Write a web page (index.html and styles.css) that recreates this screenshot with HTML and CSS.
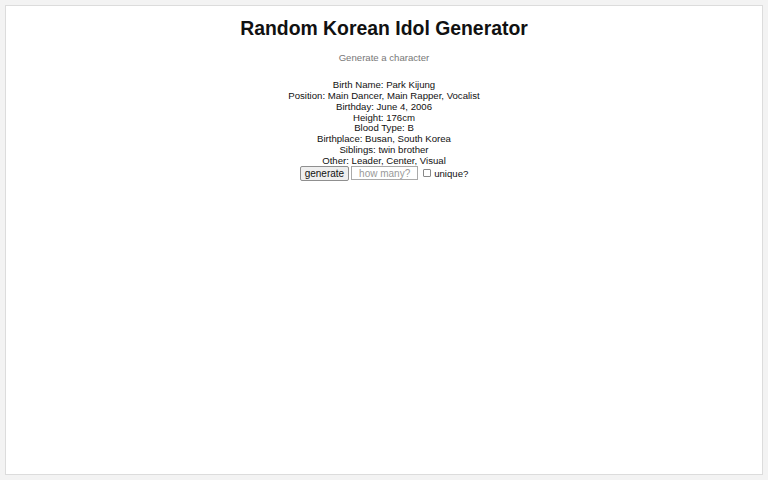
FILE: index.html
```html
<!DOCTYPE html>
<html lang="en">
<head>
<meta charset="utf-8">
<title>Random Korean Idol Generator</title>
<link rel="stylesheet" href="styles.css">
</head>
<body>
<main class="panel">
  <h1 class="title">Random Korean Idol Generator</h1>
  <p class="subtitle">Generate a character</p>
  <div class="profile">
    <div>Birth Name: Park Kijung</div>
    <div>Position: Main Dancer, Main Rapper, Vocalist</div>
    <div>Birthday: June 4, 2006</div>
    <div>Height: 176cm</div>
    <div>Blood Type: B</div>
    <div>Birthplace: Busan, South Korea</div>
    <div>Siblings: twin brother</div>
    <div>Other: Leader, Center, Visual</div>
  </div>
  <form class="controls">
    <button type="button" class="btn">generate</button>
    <input type="text" class="count" placeholder="how many?">
    <label class="unique"><input type="checkbox" class="box"> unique?</label>
  </form>
</main>
</body>
</html>
```

FILE: styles.css
```css
html, body {
  margin: 0;
  padding: 0;
  height: 100%;
}

body {
  background: #f3f3f3;
  padding: 5px;
  box-sizing: border-box;
  font-family: "Liberation Sans", Arial, sans-serif;
  color: #111;
}

.panel {
  background: #fff;
  border: 1px solid #dcdcdc;
  height: 100%;
  box-sizing: border-box;
  text-align: center;
  padding-top: 10px;
}

.title {
  font-size: 19.4px;
  font-weight: bold;
  margin: 0;
  line-height: 24px;
}

.subtitle {
  margin: 12px 0 0;
  font-size: 9.6px;
  color: #777;
  line-height: 12px;
}

.profile {
  margin-top: 16px;
  font-size: 9.6px;
  line-height: 10.86px;
}

.controls {
  margin: -1px 0 0;
  display: flex;
  justify-content: center;
  align-items: center;
  gap: 2px;
  font-size: 9.6px;
}

.btn {
  font: inherit;
  font-size: 10px;
  padding: 1px 4px;
  height: 15px;
  line-height: 11px;
  border: 1px solid #8f8f8f;
  border-radius: 2px;
  background: #efefef;
  color: #111;
}

.count {
  font: inherit;
  font-size: 10px;
  width: 67px;
  height: 14px;
  box-sizing: border-box;
  border: 1px solid #aaa;
  padding: 0 4px;
  text-align: center;
}

.count::placeholder {
  color: #999;
}

.unique {
  display: flex;
  align-items: center;
  gap: 3px;
  margin-left: 3px;
}

.box {
  appearance: none;
  -webkit-appearance: none;
  margin: 0;
  width: 8px;
  height: 8px;
  border: 1px solid #888;
  border-radius: 1px;
  background: #fff;
  box-sizing: border-box;
}
```
